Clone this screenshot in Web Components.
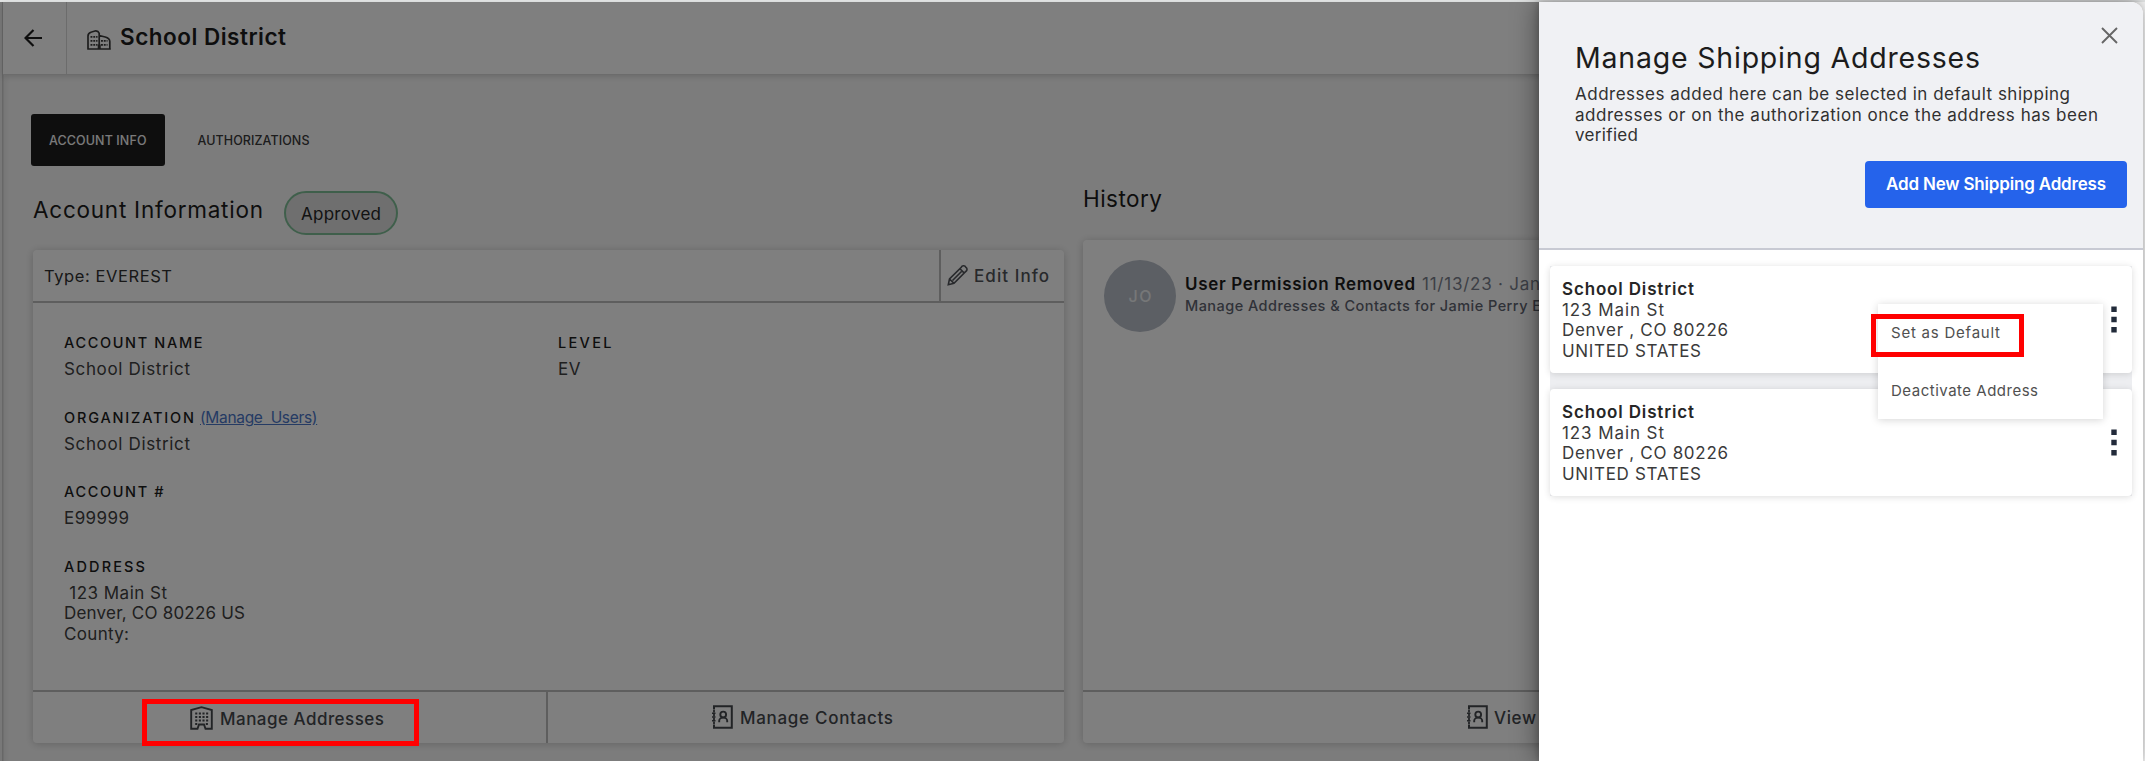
<!DOCTYPE html>
<html lang="en">
<head>
<meta charset="utf-8">
<title>School District</title>
<style>
    html, body{
        margin: 0;
        height: 100%;
        overflow: hidden;
    }
    body{
        font-family: Inter, "Open Sans", sans-serif;
        background: #e3e5e5;
    }
</style>
</head>
<body>
<account-app></account-app>
<script>
// One line of text, tracked so that it fills the given width
class TrackedText extends HTMLElement{
    constructor(){
        super();
        this._shadowRoot = this.attachShadow({mode: 'open'});
    }
    connectedCallback(){
        this._shadowRoot.innerHTML = `<style>
                :host{
                    display: inline-block;
                    white-space: pre;
                    flex: none;
                    vertical-align: top;
                    text-decoration: inherit;
                }
                span{
                    display: inline-block;
                    vertical-align: top;
                    text-decoration: inherit;
                }
            </style><span><slot></slot></span>`;
        const width = Number(this.getAttribute('width'));
        const natural = this._shadowRoot.querySelector('span').getBoundingClientRect().width;
        const gaps = this.textContent.length - 1;
        this.style.letterSpacing = `${(width - natural) / gaps}px`;
        this.style.width = `${width}px`;
    }
}
customElements.define('tracked-text', TrackedText);

const icons = {
    back: `<svg width="19" height="18" viewBox="0 0 19 18"><path d="M18 9H2M9.5 1 1.5 9l8 8" stroke-width="2.2"/></svg>`,
    city: `<svg width="24" height="20" viewBox="0 0 24 20"><path d="M1 19V6C1 3.500 2.500 2.500 4.500 2L8 1c2-.3 3.500.5 4.200 2.200V19M12.200 5.500l6 1.500c2.600.7 4.600 1.800 4.600 4.500V19M.2 19h23.600" stroke-width="1.700"/><path d="M3.500 6.800h7M3.500 10.800h7M3.500 14.800h7M14 10.800h6.500M14 14.800h6.500" stroke-width="1.700" stroke-dasharray="1.900 .9"/><path d="M12.200 14.500V19" stroke-width="3"/></svg>`,
    pencil: `<svg width="21" height="21" viewBox="0 0 21 21"><path d="M1.300 19.700 2.500 14 14.300 2.200a2.500 2.500 0 0 1 4.500 0 2.500 2.500 0 0 1 0 4.300L7 18.300ZM13 3.800l4.300 4.300M2.500 14 7 18.300M5.500 15.500l9-9" stroke-width="1.600"/></svg>`,
    building: `<svg width="23" height="24" viewBox="0 0 23 24"><path d="M1.200 22.800V4L11.500 1.200 21.800 4v18.800h-6.300L14 18.500H9L7.500 22.800Z" stroke-width="1.900"/><path d="M5.200 7.500h13M5.200 11h13M5.200 14.500h13M5.200 18h2.500M15.800 18h2.500" stroke-width="2" stroke-dasharray="2.100 1.530"/></svg>`,
    contact: `<svg width="21" height="24" viewBox="0 0 21 24"><path d="M2 4.500V1.200h17.800v21.600H2V19.500" stroke-width="2"/><path d="M2 5v14" stroke-width="1.800" stroke-dasharray="2.600 1.200"/><path d="M0 8.200h3.500M0 12h3.500M0 15.800h3.500" stroke-width="1.400"/><circle cx="11.200" cy="9.500" r="2.900" stroke-width="1.900"/><path d="M7.200 17.200v-1.400c0-2 2-3.200 4-3.200s4 1.200 4 3.200v1.400" stroke-width="1.900"/></svg>`,
    close: `<svg width="17" height="17" viewBox="0 0 17 17"><path d="m1 1 15 15M16 1 1 16" stroke-width="1.900"/></svg>`,
    dots: `<svg width="6" height="27" viewBox="0 0 6 27"><path d="M.3.500h5.400v5.400H.3ZM.3 10.800h5.400v5.400H.3ZM.3 21.100h5.400v5.400H.3Z" fill="currentColor" stroke="none"/></svg>`
};

class AppIcon extends HTMLElement{
    constructor(){
        super();
        this._shadowRoot = this.attachShadow({mode: 'open'});
    }
    connectedCallback(){
        this._shadowRoot.innerHTML = `
            <style>
                :host{
                    display: block;
                    flex: none;
                }
                svg{
                    display: block;
                    fill: none;
                    stroke: currentColor;
                }
            </style>
            ${icons[this.getAttribute('name')]}
        `;
    }
}
customElements.define('app-icon', AppIcon);

class TopBar extends HTMLElement{
    constructor(){
        super();
        this._shadowRoot = this.attachShadow({mode: 'open'});
    }
    connectedCallback(){
        this._shadowRoot.innerHTML = `
            <style>
                :host{
                    display: flex;
                    height: 72px;
                    background: #fff;
                    border-bottom: 1px solid #d9d9d9;
                    box-shadow: 0 2px 6px rgba(0,0,0,.14);
                    color: #1c1c1c;
                }
                .back{
                    box-sizing: border-box;
                    width: 64px;
                    padding: 27px 0 0 21px;
                    border-right: 1px solid #d9d9d9;
                }
                .title{
                    display: flex;
                    margin-left: 20px;
                    gap: 9px;
                    font-size: 22.500px;
                    font-weight: 600;
                    line-height: 70px;
                }
                .title app-icon{
                    margin-top: 28px;
                    color: #3a3a3a;
                }
            </style>
            <div class="back"><app-icon name="back"></app-icon></div>
            <div class="title"><app-icon name="city"></app-icon><tracked-text width="166">School District</tracked-text></div>
        `;
    }
}
customElements.define('top-bar', TopBar);

class TabList extends HTMLElement{
    constructor(){
        super();
        this._shadowRoot = this.attachShadow({mode: 'open'});
    }
    connectedCallback(){
        this._shadowRoot.innerHTML = `
            <style>
                :host{
                    display: flex;
                    height: 52px;
                    line-height: 53px;
                    font-size: 12.500px;
                    font-weight: 500;
                    color: #3a3a3a;
                    gap: 33px;
                }
                .active{
                    padding: 0 18px;
                    border-radius: 3px;
                    background: #1c1c1c;
                    color: #f5f5f5;
                }
            </style>
            <div class="active"><tracked-text width="97.500">ACCOUNT INFO</tracked-text></div>
            <div><tracked-text width="112">AUTHORIZATIONS</tracked-text></div>
        `;
    }
}
customElements.define('tab-list', TabList);

// Label over a value, the value is slotted
class InfoField extends HTMLElement{
    constructor(){
        super();
        this._shadowRoot = this.attachShadow({mode: 'open'});
    }
    connectedCallback(){
        this._shadowRoot.innerHTML = `
            <style>
                :host{
                    display: block;
                    color: #404040;
                    font-size: 17px;
                    line-height: 20.600px;
                }
                .label{
                    display: flex;
                    gap: 6px;
                    height: 20px;
                    margin-bottom: 6px;
                    font-size: 14.500px;
                    font-weight: 450;
                    line-height: 20px;
                    color: #1c1c1c;
                }
                .value{
                    display: flex;
                    flex-direction: column;
                    align-items: flex-start;
                }
            </style>
            <div class="label"><tracked-text width="${this.getAttribute('label-width')}">${this.getAttribute('label')}</tracked-text><slot name="link"></slot></div>
            <div class="value"><slot></slot></div>
        `;
    }
}
customElements.define('info-field', InfoField);

class AccountPanel extends HTMLElement{
    constructor(){
        super();
        this._shadowRoot = this.attachShadow({mode: 'open'});
    }
    connectedCallback(){
        this._shadowRoot.innerHTML = `
            <style>
                :host{
                    display: block;
                    width: 1031px;
                    padding-top: 25px;
                }
                .heading{
                    display: flex;
                    height: 44px;
                    gap: 21px;
                    margin-bottom: 15px;
                    font-size: 22.500px;
                    line-height: 37px;
                    color: #1c1c1c;
                }
                .badge{
                    box-sizing: border-box;
                    height: 44px;
                    padding: 0 15px;
                    border: 2px solid #7fbf97;
                    border-radius: 22px;
                    background: #dedede;
                    font-size: 17px;
                    line-height: 42px;
                    color: #262626;
                }
                .card{
                    display: flex;
                    flex-direction: column;
                    height: 493px;
                    background: #fff;
                    border-radius: 4px;
                    box-shadow: 0 1px 9px rgba(0,0,0,.2);
                }
                .type{
                    display: flex;
                    justify-content: space-between;
                    height: 51px;
                    padding-left: 11px;
                    border-bottom: 2px solid #bdbdbd;
                    font-size: 16.500px;
                    line-height: 53px;
                    color: #303030;
                }
                .edit{
                    display: flex;
                    box-sizing: border-box;
                    width: 125px;
                    gap: 6px;
                    padding-left: 6px;
                    border-left: 2px solid #bdbdbd;
                    color: #505358;
                    font-size: 17px;
                    font-weight: 500;
                }
                .edit app-icon{
                    margin-top: 15px;
                }
                .fields{
                    display: grid;
                    grid-template-columns: 494px 1fr;
                    grid-auto-rows: 46.500px;
                    row-gap: 28px;
                    flex: 1;
                    padding: 30px 31px 0;
                }
                .fields :nth-child(n+3){
                    grid-column: 1;
                }
                a{
                    font-size: 15.500px;
                    font-weight: 400;
                    color: #4a76c8;
                    text-decoration: underline;
                }
                .actions{
                    display: flex;
                    height: 51px;
                    border-top: 2px solid #bdbdbd;
                    color: #45484d;
                    font-size: 17px;
                    font-weight: 500;
                }
                .actions div{
                    display: flex;
                    box-sizing: border-box;
                    width: 513px;
                    padding: 1px 0 0 157px;
                    gap: 7px;
                    line-height: 52px;
                }
                .actions div + div{
                    width: 518px;
                    padding: 0 0 0 164px;
                    border-left: 2px solid #bdbdbd;
                }
                .actions app-icon{
                    margin-top: 13px;
                }
            </style>
            <div class="heading">
                <tracked-text width="230">Account Information</tracked-text>
                <div class="badge"><tracked-text width="80">Approved</tracked-text></div>
            </div>
            <div class="card">
                <div class="type">
                    <tracked-text width="128">Type: EVEREST</tracked-text>
                    <div class="edit"><app-icon name="pencil"></app-icon><tracked-text width="75">Edit Info</tracked-text></div>
                </div>
                <div class="fields">
                    <info-field label="ACCOUNT NAME" label-width="138.500"><tracked-text width="126">School District</tracked-text></info-field>
                    <info-field label="LEVEL" label-width="53.500"><tracked-text width="22.500">EV</tracked-text></info-field>
                    <info-field label="ORGANIZATION" label-width="130"><a slot="link"><tracked-text width="117.500">(Manage  Users)</tracked-text></a><tracked-text width="126">School District</tracked-text></info-field>
                    <info-field label="ACCOUNT #" label-width="99.500"><tracked-text width="65">E99999</tracked-text></info-field>
                    <info-field label="ADDRESS" label-width="81"><tracked-text width="103"> 123 Main St</tracked-text><tracked-text width="181">Denver, CO 80226 US</tracked-text><tracked-text width="65">County:</tracked-text></info-field>
                </div>
                <div class="actions">
                    <div><app-icon name="building"></app-icon><tracked-text width="164">Manage Addresses</tracked-text></div>
                    <div><app-icon name="contact"></app-icon><tracked-text width="153">Manage Contacts</tracked-text></div>
                </div>
            </div>
        `;
    }
}
customElements.define('account-panel', AccountPanel);

class HistoryPanel extends HTMLElement{
    constructor(){
        super();
        this._shadowRoot = this.attachShadow({mode: 'open'});
    }
    connectedCallback(){
        this._shadowRoot.innerHTML = `
            <style>
                :host{
                    display: block;
                    width: 1031px;
                    padding-top: 11px;
                }
                .heading{
                    height: 44px;
                    margin-bottom: 19px;
                    font-size: 22.500px;
                    line-height: 43px;
                    color: #1c1c1c;
                }
                .card{
                    display: flex;
                    flex-direction: column;
                    height: 503px;
                    background: #fff;
                    border-radius: 4px;
                    box-shadow: 0 1px 9px rgba(0,0,0,.2);
                }
                .entry{
                    display: flex;
                    flex: 1;
                    gap: 9px;
                    padding: 20px 0 0 21px;
                }
                .avatar{
                    width: 72px;
                    height: 72px;
                    border-radius: 50%;
                    background: #b8bec8;
                    color: #eceef0;
                    font-size: 16px;
                    font-weight: 500;
                    line-height: 73px;
                    text-align: center;
                }
                .text{
                    padding-top: 13px;
                    color: #7a7f8c;
                    font-size: 17px;
                    line-height: 22px;
                }
                .first{
                    display: flex;
                    gap: 7px;
                }
                b{
                    font-weight: 600;
                    color: #1c1c1c;
                }
                .second{
                    font-size: 14.500px;
                    font-weight: 450;
                    color: #5f6471;
                    line-height: 21px;
                }
                .actions{
                    display: flex;
                    height: 51px;
                    border-top: 2px solid #bdbdbd;
                    padding-left: 384px;
                    gap: 6px;
                    color: #45484d;
                    font-size: 17px;
                    font-weight: 500;
                    line-height: 52px;
                }
                .actions app-icon{
                    margin-top: 13px;
                }
            </style>
            <div class="heading"><tracked-text width="79">History</tracked-text></div>
            <div class="card">
                <div class="entry">
                    <div class="avatar"><tracked-text width="23">JO</tracked-text></div>
                    <div class="text">
                        <div class="first"><b><tracked-text width="230">User Permission Removed</tracked-text></b><tracked-text width="118">11/13/23 · Jan</tracked-text></div>
                        <div class="second"><tracked-text width="356">Manage Addresses &amp; Contacts for Jamie Perry E</tracked-text></div>
                    </div>
                </div>
                <div class="actions"><app-icon name="contact"></app-icon><tracked-text width="42">View</tracked-text></div>
            </div>
        `;
    }
}
customElements.define('history-panel', HistoryPanel);

class AddressCard extends HTMLElement{
    constructor(){
        super();
        this._shadowRoot = this.attachShadow({mode: 'open'});
    }
    connectedCallback(){
        this._shadowRoot.innerHTML = `
            <style>
                :host{
                    display: flex;
                    box-sizing: border-box;
                    justify-content: space-between;
                    position: relative;
                    height: 107px;
                    padding: 13px 15px 0 12px;
                    border-radius: 4px;
                    background: #fff;
                    box-shadow: 0 1px 7px rgba(0,0,0,.14);
                    color: #3a3a3a;
                    font-size: 17px;
                    line-height: 20.500px;
                }
                .lines{
                    display: flex;
                    flex-direction: column;
                }
                b{
                    font-weight: 600;
                    color: #262626;
                }
                .dots{
                    margin-top: 27px;
                    color: #222b3a;
                }
            </style>
            <div class="lines">
                <b><tracked-text width="132">School District</tracked-text></b>
                <tracked-text width="102">123 Main St</tracked-text>
                <tracked-text width="166">Denver , CO 80226</tracked-text>
                <tracked-text width="139">UNITED STATES</tracked-text>
            </div>
            <app-icon class="dots" name="dots"></app-icon>
            <slot></slot>
        `;
    }
}
customElements.define('address-card', AddressCard);

class AddressMenu extends HTMLElement{
    constructor(){
        super();
        this._shadowRoot = this.attachShadow({mode: 'open'});
    }
    connectedCallback(){
        this._shadowRoot.innerHTML = `
            <style>
                :host{
                    position: absolute;
                    top: 38px;
                    left: 328px;
                    z-index: 2;
                    box-sizing: border-box;
                    width: 225px;
                    height: 115px;
                    padding-left: 13px;
                    background: #fff;
                    box-shadow: 0 1px 8px rgba(0,0,0,.17);
                    color: #505050;
                    font-size: 15px;
                    line-height: 58px;
                }
                .mark{
                    position: absolute;
                    top: 10px;
                    left: -7px;
                    box-sizing: border-box;
                    width: 153px;
                    height: 43px;
                    border: 5px solid #f00;
                }
            </style>
            <div><tracked-text width="109">Set as Default</tracked-text></div>
            <div><tracked-text width="147">Deactivate Address</tracked-text></div>
            <div class="mark"></div>
        `;
    }
}
customElements.define('address-menu', AddressMenu);

class ShippingDrawer extends HTMLElement{
    constructor(){
        super();
        this._shadowRoot = this.attachShadow({mode: 'open'});
    }
    connectedCallback(){
        this._shadowRoot.innerHTML = `
            <style>
                :host{
                    position: absolute;
                    top: 2px;
                    right: 2px;
                    width: 604px;
                    height: 759px;
                    background: #fff;
                    border-top-right-radius: 12px;
                    box-shadow: -4px 0 24px rgba(0,0,0,.35), -1px 0 6px rgba(0,0,0,.2);
                }
                header{
                    display: flex;
                    flex-direction: column;
                    box-sizing: border-box;
                    height: 248px;
                    padding: 25px 16px 0 36px;
                    border-bottom: 2px solid #c8cad3;
                    border-top-right-radius: 12px;
                    background: #f0f1f4;
                }
                .close{
                    align-self: flex-end;
                    margin-right: 9px;
                    color: #666;
                }
                h1{
                    margin: -4px 0 0;
                    font-size: 28.500px;
                    font-weight: 400;
                    line-height: 36px;
                    color: #1c1c1c;
                }
                p{
                    display: flex;
                    flex-direction: column;
                    margin: 8px 0 0;
                    font-size: 17px;
                    line-height: 20.500px;
                    color: #303030;
                }
                button{
                    align-self: flex-end;
                    height: 47px;
                    margin-top: 15px;
                    padding: 0 21px;
                    border: none;
                    border-radius: 4px;
                    background: #2563eb;
                    color: #fff;
                    font: 600 17px/47px Inter, sans-serif;
                }
                .list{
                    display: flex;
                    flex-direction: column;
                    gap: 16px;
                    width: 582px;
                    margin: 16px 0 0 11px;
                    background: #edeef1;
                }
            </style>
            <header>
                <app-icon class="close" name="close"></app-icon>
                <h1><tracked-text width="405">Manage Shipping Addresses</tracked-text></h1>
                <p>
                    <tracked-text width="495">Addresses added here can be selected in default shipping</tracked-text>
                    <tracked-text width="523">addresses or on the authorization once the address has been</tracked-text>
                    <tracked-text width="63">verified</tracked-text>
                </p>
                <button><tracked-text width="220">Add New Shipping Address</tracked-text></button>
            </header>
            <div class="list">
                <address-card style="z-index: 1"><address-menu></address-menu></address-card>
                <address-card></address-card>
            </div>
        `;
    }
}
customElements.define('shipping-drawer', ShippingDrawer);

class AccountApp extends HTMLElement{
    constructor(){
        super();
        this._shadowRoot = this.attachShadow({mode: 'open'});
    }
    connectedCallback(){
        this._shadowRoot.innerHTML = `
            <style>
                :host{
                    display: block;
                    position: relative;
                    box-sizing: border-box;
                    width: 2145px;
                    height: 761px;
                    padding-top: 2px;
                    overflow: hidden;
                }
                .page{
                    height: 759px;
                    width: 2140px;
                    box-sizing: border-box;
                    padding-left: 3px;
                    background: linear-gradient(to right, #f0f0f0 2px, #cfcfcf 2px, #cfcfcf 3px, #eee 4px, #f9f9f9 10px);
                }
                tab-list{
                    margin: 39px 0 0 28px;
                }
                .columns{
                    display: flex;
                    gap: 19px;
                    margin-left: 30px;
                }
                account-panel, history-panel{
                    flex: none;
                }
                .overlay{
                    position: absolute;
                    inset: 2px 5px 0 0;
                    background: rgba(0,0,0,.5);
                }
                .mark{
                    position: absolute;
                    top: 699px;
                    left: 142px;
                    box-sizing: border-box;
                    width: 277px;
                    height: 47px;
                    border: 5px solid #f00;
                }
                .edge{
                    position: absolute;
                    inset: 2px 0 0 auto;
                    width: 14px;
                    background: #f5f5f5;
                }
            </style>
            <div class="page">
                <top-bar></top-bar>
                <tab-list></tab-list>
                <div class="columns">
                    <account-panel></account-panel>
                    <history-panel></history-panel>
                </div>
            </div>
            <div class="overlay"></div>
            <div class="mark"></div>
            <div class="edge"></div>
            <shipping-drawer></shipping-drawer>
        `;
    }
}
customElements.define('account-app', AccountApp);
</script>
</body>
</html>
